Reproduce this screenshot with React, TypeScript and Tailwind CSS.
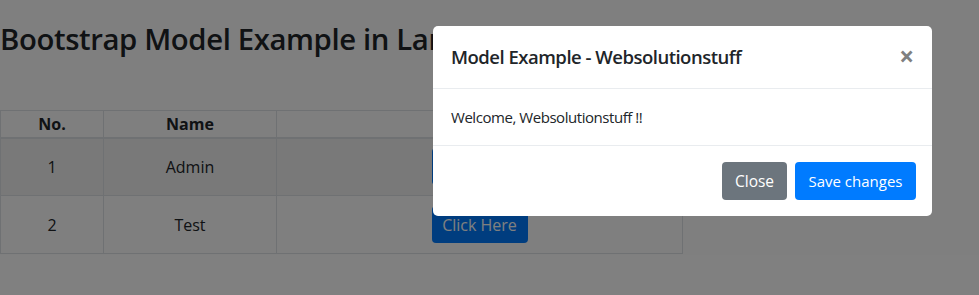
const font = { fontFamily: '"Open Sans", "Noto Sans", Arial, sans-serif' };

const rows = [
  { no: 1, name: "Admin" },
  { no: 2, name: "Test" },
];

export default function App() {
  return (
    <div className="relative w-[979px] h-[295px] overflow-hidden bg-white text-[#212529]" style={font}>
      {/* page */}
      <div className="pt-[20px]">
        <h2 className="text-[29.3px] leading-[38px] font-semibold tracking-[-0.38px]">Bootstrap Model Example in Laravel</h2>
        <table className="mt-[52px] w-[683px] border-collapse text-[16px]">
          <thead>
            <tr className="h-[27px]">
              <th className="w-[103px] border border-[#dee2e6] border-b-2 font-bold text-center">No.</th>
              <th className="w-[173px] border border-[#dee2e6] border-b-2 font-bold text-center">Name</th>
              <th className="border border-[#dee2e6] border-b-2"></th>
            </tr>
          </thead>
          <tbody>
            {rows.map((r, i) => (
              <tr key={r.no} className={`h-[58px] ${i === 0 ? "bg-black/5" : ""}`}>
                <td className="border border-[#dee2e6] text-center">{r.no}</td>
                <td className="border border-[#dee2e6] text-center">{r.name}</td>
                <td className="border border-[#dee2e6] text-center">
                  <button className="h-[37px] w-[96px] rounded-[4px] bg-[#007bff] text-white text-[16px]">Click Here</button>
                </td>
              </tr>
            ))}
          </tbody>
        </table>
      </div>

      {/* backdrop */}
      <div className="absolute inset-0 bg-black/50" />

      {/* modal */}
      <div className="absolute left-[433px] top-[26px] w-[499px] rounded-[5px] bg-white">
        <div className="flex items-center justify-between h-[63px] px-4 border-b border-[#e9ecef]">
          <h5 className="text-[18.5px] font-semibold leading-[30px] pl-[2px] tracking-[-0.5px]">Model Example - Websolutionstuff</h5>
          <span className="text-[26px] font-bold leading-none text-[#808080] pr-[2px] -mt-[2px]">×</span>
        </div>
        <div className="h-[57px] flex items-center px-4 border-b border-[#e9ecef]">
          <p className="text-[15px] pl-[2px] tracking-[-0.45px]">Welcome, Websolutionstuff !!</p>
        </div>
        <div className="h-[70px] flex items-center justify-end gap-2 pr-4">
          <button className="h-[38px] w-[65px] rounded-[4px] bg-[#6c757d] text-white text-[15.5px] pt-[1px]">Close</button>
          <button className="h-[38px] w-[121px] rounded-[4px] bg-[#007bff] text-white text-[15px]">Save changes</button>
        </div>
      </div>
    </div>
  );
}
